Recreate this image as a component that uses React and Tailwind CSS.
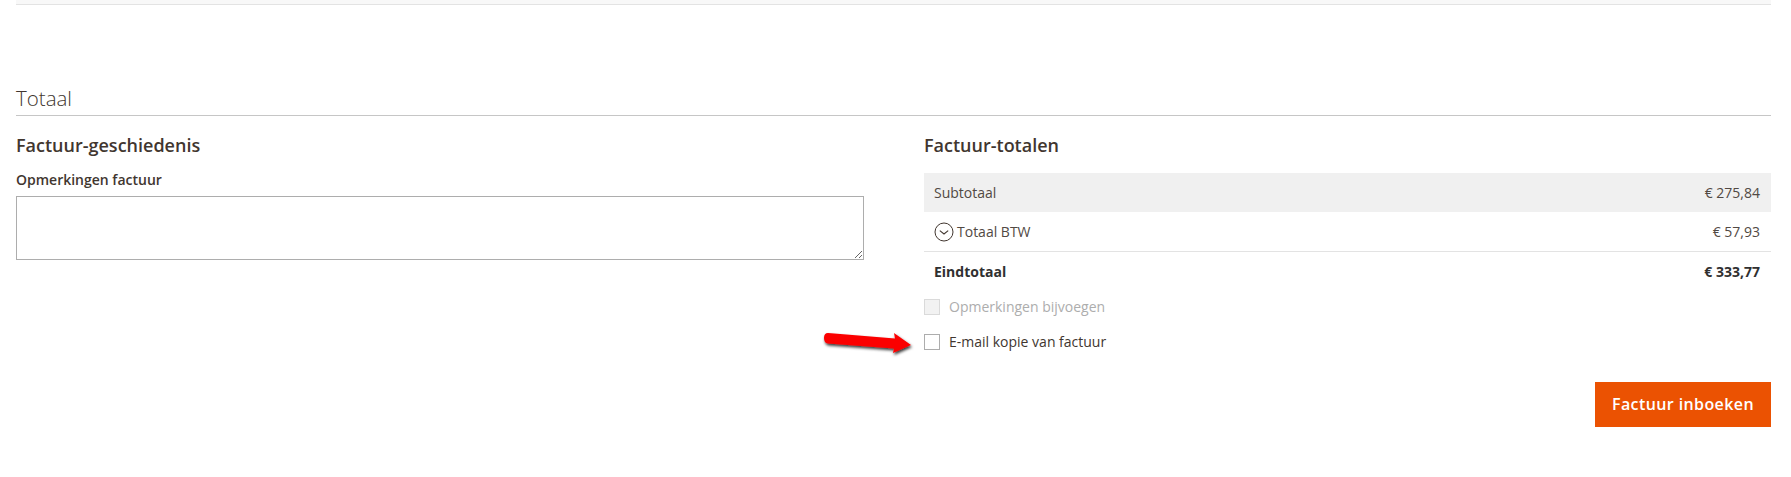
function TotalRow({ label, amount, className = '', children }) {
  return (
    <div className={`flex items-center justify-between pl-[10px] pr-[11px] ${className}`}>
      <div className="flex items-center gap-[3px]">
        {children}
        {label}
      </div>
      <div>{amount}</div>
    </div>
  )
}

function CheckRow({ label, disabled }) {
  return (
    <label className={`flex h-[16px] items-center gap-[9px] ${disabled ? 'text-[#adadad]' : 'text-[#41362f]'}`}>
      <span
        className={`block h-[16px] w-[16px] border ${
          disabled ? 'border-[#dadada] bg-[#f2f2f2]' : 'border-[#adadad] bg-white'
        }`}
      />
      {label}
    </label>
  )
}

function RedArrow() {
  return (
    <svg className="absolute left-[-103px] top-[-8px]" width="100" height="38" viewBox="0 0 100 38">
      <defs>
        <filter id="arrowShadow" x="-10%" y="-30%" width="120%" height="170%">
          <feDropShadow dx="1" dy="2" stdDeviation="1.5" floodColor="#000" floodOpacity="0.8" />
        </filter>
      </defs>
      <path
        d="M7 7 L74 12.5 L73 7 L90 19 L72 27 L73 22.5 L7 17.5 Q3 17 3 12 Q3 7 7 7 Z"
        fill="#fb0000"
        filter="url(#arrowShadow)"
      />
    </svg>
  )
}

export default function App() {
  return (
    <div className="h-[477px] overflow-hidden bg-white px-4 font-['Open_Sans',sans-serif] text-[14px] text-[#41362f]">
      <div className="mr-[4px] h-[5px] border-b border-[#e3e3e3] bg-[#f8f8f8]" />

      <h2 className="mt-[80px] mr-[4px] border-b border-[#c6c6c6] pb-[3px] text-[20.5px] leading-[27px] font-light">
        Totaal
      </h2>

      <div className="mt-[17px] flex items-start">
        <div className="w-[848px] shrink-0">
          <h3 className="text-[18px] leading-[24px] font-semibold">Factuur-geschiedenis</h3>
          <div className="mt-[13px] text-[14px] leading-[19px] font-semibold">Opmerkingen factuur</div>
          <textarea className="mt-[7px] block h-[64px] w-full border border-[#adadad] bg-white" />
        </div>

        <div className="ml-[60px] flex-1">
          <h3 className="text-[18px] leading-[24px] font-semibold">Factuur-totalen</h3>
          <div className="mt-[16px] w-[847px] text-[14px] leading-[19px] text-[#514943]">
            <TotalRow label="Subtotaal" amount="€ 275,84" className="h-[39px] bg-[#f0f0f0]" />
            <TotalRow label="Totaal BTW" amount="€ 57,93" className="h-[40px] border-b border-[#e3e3e3]">
              <svg width="20" height="20" viewBox="0 0 20 20" fill="none" stroke="#41362f" strokeWidth="1">
                <circle cx="10" cy="10" r="9" />
                <path d="M5.8 8.6 L10 12 L14.2 8.6" strokeWidth="1.1" />
              </svg>
            </TotalRow>
            <TotalRow label="Eindtotaal" amount="€ 333,77" className="h-[38px] font-bold text-[#303030]" />
          </div>
          <div className="mt-[9px] flex flex-col gap-[19px] leading-[16px]">
            <CheckRow label="Opmerkingen bijvoegen" disabled />
            <div className="relative">
              <RedArrow />
              <CheckRow label="E-mail kopie van factuur" />
            </div>
          </div>
          <div className="mt-[32px] flex w-[847px] justify-end">
            <button className="h-[45px] w-[176px] bg-[#eb5202] pb-[2px] text-[16px] font-semibold tracking-[0.4px] text-white">
              Factuur inboeken
            </button>
          </div>
        </div>
      </div>
    </div>
  )
}
